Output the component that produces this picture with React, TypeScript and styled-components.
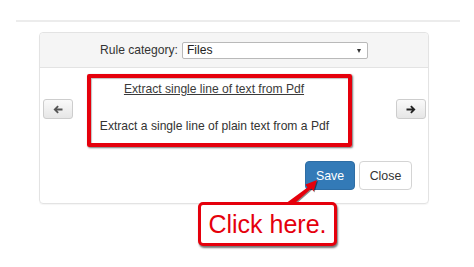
import React from 'react';
import styled, { createGlobalStyle } from 'styled-components';

const GlobalStyle = createGlobalStyle`
  html, body {
    margin: 0;
    padding: 0;
    background: #fff;
  }
  body {
    font-family: "Liberation Sans", Arial, sans-serif;
    color: #333;
  }
`;

const Page = styled.div`
  position: relative;
  width: 474px;
  height: 267px;
  padding-top: 20px;
  box-sizing: border-box;
  overflow: hidden;
`;

const Rule = styled.div`
  height: 2px;
  margin: 0 14px 0 16px;
  background: #ececec;
`;

const Panel = styled.div`
  margin: 10px 0 0 39px;
  width: 390px;
  border: 1px solid #e3e3e3;
  border-radius: 4px;
  box-sizing: border-box;
  box-shadow: 0 1px 1px rgba(0, 0, 0, 0.04);
`;

const Header = styled.div`
  display: flex;
  align-items: center;
  height: 35px;
  padding-left: 60px;
  background: #f5f5f5;
  border-bottom: 1px solid #e3e3e3;
  border-radius: 4px 4px 0 0;
  box-sizing: border-box;
  font-size: 12.1px;
`;

const Label = styled.span`
  margin-right: 4px;
`;

const Select = styled.div`
  position: relative;
  width: 186px;
  height: 17px;
  border: 1px solid #b9b9b9;
  border-radius: 2px;
  background: #fff;
  box-sizing: border-box;
  padding-left: 4px;
  line-height: 15px;
  font-size: 12.1px;
  color: #222;

  &::after {
    content: '';
    position: absolute;
    right: 6px;
    top: 6px;
    border-left: 2.5px solid transparent;
    border-right: 2.5px solid transparent;
    border-top: 4px solid #333;
  }
`;

const Body = styled.div`
  display: flex;
  align-items: center;
  padding: 6px 2px 0 3px;
`;

const NavButton = styled.div`
  display: flex;
  align-items: center;
  justify-content: center;
  width: 30px;
  height: 20px;
  border: 1px solid #cdcdcd;
  border-radius: 3px;
  box-sizing: border-box;
  background: linear-gradient(#fafafa, #e6e6e6);
  margin-top: -3px;
`;

const Highlight = styled.div`
  width: 267px;
  height: 73px;
  margin: 0 44px 0 14px;
  border: 4px solid #e5000c;
  border-radius: 2px;
  box-sizing: border-box;
  box-shadow: 1px 1px 2px rgba(0, 0, 0, 0.55), inset 1px 1px 1px rgba(0, 0, 0, 0.25);
  padding: 3px 0 0 9px;
  font-size: 12.1px;
  line-height: 16px;
`;

const Title = styled.div`
  text-align: center;
  padding-right: 20px;
  text-decoration: underline;
  color: #3a3a3a;
`;

const Description = styled.div`
  margin-top: 21px;
`;

const Footer = styled.div`
  display: flex;
  justify-content: flex-end;
  gap: 4px;
  padding: 14px 16px 13px 0;
`;

const Button = styled.div<{ $primary?: boolean }>`
  display: flex;
  align-items: center;
  justify-content: center;
  height: 29px;
  width: ${(p) => (p.$primary ? '50px' : '53px')};
  border-radius: 4px;
  box-sizing: border-box;
  font-size: 12.4px;
  border: 1px solid ${(p) => (p.$primary ? '#2e6da4' : '#d4d4d4')};
  background: ${(p) => (p.$primary ? '#337ab7' : '#fff')};
  color: ${(p) => (p.$primary ? '#fff' : '#333')};
`;

const Pointer = styled.svg`
  position: absolute;
  left: 280px;
  top: 174px;
`;

const Callout = styled.div`
  position: absolute;
  left: 198px;
  top: 202px;
  width: 139px;
  height: 44px;
  display: flex;
  align-items: center;
  justify-content: center;
  border: 3px solid #e5000c;
  border-radius: 5px;
  background: #fff;
  box-sizing: border-box;
  box-shadow: 1px 2px 2px rgba(0, 0, 0, 0.55);
  font-size: 25px;
  color: #e5000c;
  padding-top: 1px;
`;

const ArrowIcon: React.FC<{ dir: 'left' | 'right' }> = ({ dir }) => (
  <svg width="10" height="9" viewBox="0 0 10 9" style={{ transform: dir === 'right' ? 'scaleX(-1)' : undefined }}>
    <path d="M0.5 4.5 L4.5 0.5 L5.8 1.8 L4 3.5 L9.5 3.5 L9.5 5.5 L4 5.5 L5.8 7.2 L4.5 8.5 Z" fill={dir === 'right' ? '#222' : '#555'} />
  </svg>
);

const pointerPath = 'M7 28.5 L27.5 13.5 L25.5 10.5 L37 6 L33.5 17.5 L31.5 14.5 L11 32.5 Z';

export default function App() {
  return (
    <>
      <GlobalStyle />
      <Page>
        <Rule />
        <Panel>
          <Header>
            <Label>Rule category:</Label>
            <Select>Files</Select>
          </Header>
          <Body>
            <NavButton>
              <ArrowIcon dir="left" />
            </NavButton>
            <Highlight>
              <Title>Extract single line of text from Pdf</Title>
              <Description>Extract a single line of plain text from a Pdf</Description>
            </Highlight>
            <NavButton>
              <ArrowIcon dir="right" />
            </NavButton>
          </Body>
          <Footer>
            <Button $primary>Save</Button>
            <Button>Close</Button>
          </Footer>
        </Panel>
        <Pointer width="50" height="34" viewBox="0 0 50 34">
          <g transform="translate(1 1)">
            <path d={pointerPath} fill="rgba(0,0,0,0.45)" />
          </g>
          <path d={pointerPath} fill="#e5000c" />
        </Pointer>
        <Callout>Click here.</Callout>
      </Page>
    </>
  );
}
